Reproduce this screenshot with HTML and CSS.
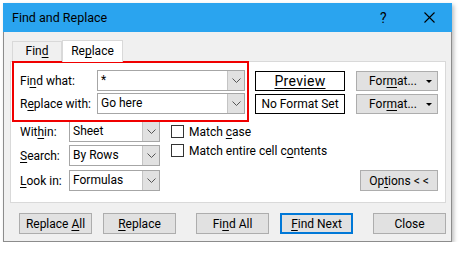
FILE: index.html
```html
<!DOCTYPE html>
<html lang="en">
<head>
    <meta charset="UTF-8">
    <title>Find and Replace</title>
    <link rel="stylesheet" href="styles.css">
</head>
<body>
    <div class="dialog">
        <div class="titlebar">
            <span class="title">Find and Replace</span>
            <span class="help">?</span>
            <svg class="close-x" width="11" height="11" viewBox="0 0 11 11">
                <path d="M0.5 0.5 L10.5 10.5 M10.5 0.5 L0.5 10.5" stroke="#000" stroke-width="1.1" fill="none"/>
            </svg>
        </div>

        <div class="tabs">
            <div class="tab">Fin<u>d</u></div>
            <div class="tab active">Re<u>p</u>lace</div>
        </div>

        <div class="panel">
            <!-- annotation frame round the two text fields -->
            <div class="highlight"></div>

            <div class="field-row">
                <label class="label-wide">Fi<u>n</u>d what:</label>
                <div class="combo combo-wide"><span class="combo-text">*</span><span class="combo-btn"><svg width="9" height="5" viewBox="0 0 9 5"><path d="M0.5 0.5 L4.5 4.5 L8.5 0.5" stroke="#555" fill="none"/></svg></span></div>
                <div class="preview preview-main"><u>Preview</u></div>
                <button class="btn format-btn">For<u>m</u>at... <span class="caret"></span></button>
            </div>
            <div class="field-row">
                <label class="label-wide">R<u>e</u>place with:</label>
                <div class="combo combo-wide"><span class="combo-text">Go here</span><span class="combo-btn"><svg width="9" height="5" viewBox="0 0 9 5"><path d="M0.5 0.5 L4.5 4.5 L8.5 0.5" stroke="#555" fill="none"/></svg></span></div>
                <div class="preview">No Format Set</div>
                <button class="btn format-btn">For<u>m</u>at... <span class="caret"></span></button>
            </div>

            <div class="options">
                <div class="option-selects">
                    <div class="select-row">
                        <label class="label-narrow">Wit<u>h</u>in:</label>
                        <div class="combo combo-narrow"><span class="combo-text">Sheet</span><span class="combo-btn"><svg width="9" height="5" viewBox="0 0 9 5"><path d="M0.5 0.5 L4.5 4.5 L8.5 0.5" stroke="#555" fill="none"/></svg></span></div>
                    </div>
                    <div class="select-row">
                        <label class="label-narrow"><u>S</u>earch:</label>
                        <div class="combo combo-narrow"><span class="combo-text">By Rows</span><span class="combo-btn"><svg width="9" height="5" viewBox="0 0 9 5"><path d="M0.5 0.5 L4.5 4.5 L8.5 0.5" stroke="#555" fill="none"/></svg></span></div>
                    </div>
                    <div class="select-row">
                        <label class="label-narrow"><u>L</u>ook in:</label>
                        <div class="combo combo-narrow"><span class="combo-text">Formulas</span><span class="combo-btn"><svg width="9" height="5" viewBox="0 0 9 5"><path d="M0.5 0.5 L4.5 4.5 L8.5 0.5" stroke="#555" fill="none"/></svg></span></div>
                    </div>
                </div>
                <div class="checks">
                    <div class="check-row"><span class="checkbox"></span><span>Match <u>c</u>ase</span></div>
                    <div class="check-row"><span class="checkbox"></span><span>Match entire cell c<u>o</u>ntents</span></div>
                </div>
                <button class="btn options-btn">Op<u>t</u>ions &lt; &lt;</button>
            </div>
        </div>

        <div class="actions">
            <button class="btn action">Replace <u>A</u>ll</button>
            <button class="btn action"><u>R</u>eplace</button>
            <button class="btn action gap-left">Fi<u>n</u>d All</button>
            <button class="btn action default"><u>F</u>ind Next</button>
            <button class="btn action gap-left">Close</button>
        </div>
    </div>
</body>
</html>
```

FILE: styles.css
```css
body {
    margin: 0;
    background: #fff;
    font-family: Roboto, "Noto Sans", sans-serif;
    font-size: 12px;
    color: #000;
}

u {
    text-decoration: underline;
    text-underline-offset: 2px;
}

.dialog {
    position: relative;
    margin: 3px 0 0 3px;
    width: 449px;
    height: 239px;
    box-sizing: border-box;
    background: #f0f0f0;
    border: 1px solid #8c8c8c;
    border-top: none;
    box-shadow: 2px 2px 4px rgba(0, 0, 0, 0.25);
}

.titlebar {
    display: flex;
    align-items: center;
    height: 29px;
    margin: 0 -1px;
    padding: 0 0 0 9px;
    background: #2aa4ef;
}

.title {
    flex: 1;
    font-size: 12.5px;
}

.help {
    width: 20px;
    font-size: 14px;
    margin-right: 24px;
}

.close-x {
    margin-right: 17px;
}

.tabs {
    display: flex;
    align-items: flex-end;
    height: 29px;
    padding-left: 8px;
}

.tab {
    box-sizing: border-box;
    height: 20px;
    width: 50px;
    padding-top: 2px;
    text-align: center;
    border: 1px solid #d9d9d9;
    border-bottom: none;
    background: #f0f0f0;
}

.tab.active {
    width: 61px;
    height: 22px;
    padding-top: 3px;
    background: #fff;
    margin-bottom: -1px;
    position: relative;
    z-index: 1;
}

.panel {
    position: relative;
    box-sizing: border-box;
    width: 436px;
    height: 142px;
    margin-left: 6px;
    padding: 8px 7px 0 9px;
    background: #fff;
    border: 1px solid #d9d9d9;
}

.highlight {
    position: absolute;
    left: 1px;
    top: -1px;
    width: 237px;
    height: 61px;
    box-sizing: border-box;
    border: 2px solid #f00000;
}

.field-row {
    display: flex;
    align-items: center;
    height: 21px;
    margin-bottom: 2px;
}

.label-wide {
    width: 77px;
}

.label-narrow {
    width: 49px;
}

.combo {
    display: flex;
    box-sizing: border-box;
    height: 21px;
    border: 1px solid #a6a6a6;
    background: #fff;
}

.combo-wide {
    width: 148px;
}

.combo-narrow {
    width: 91px;
}

.combo-text {
    flex: 1;
    padding-left: 3px;
    line-height: 18px;
}

.combo-btn {
    display: flex;
    align-items: center;
    justify-content: center;
    width: 16px;
    background: #e1e1e1;
    border-left: 1px solid #c4c4c4;
}

.preview {
    box-sizing: border-box;
    width: 90px;
    height: 20px;
    margin-left: 10px;
    border: 1px solid #000;
    text-align: center;
    line-height: 18px;
}

.preview-main {
    font-size: 14px;
    letter-spacing: 0.3px;
}

.btn {
    box-sizing: border-box;
    font-family: inherit;
    font-size: 12px;
    color: #000;
    background: #e1e1e1;
    border: 1px solid #adadad;
    padding: 0;
}

.format-btn {
    position: relative;
    width: 82px;
    height: 20px;
    margin-left: 11px;
    padding-right: 8px;
}

.caret {
    position: absolute;
    right: 5px;
    top: 8px;
    width: 0;
    height: 0;
    border-left: 3px solid transparent;
    border-right: 3px solid transparent;
    border-top: 3px solid #000;
}

.options {
    display: flex;
    margin-top: 7px;
}

.option-selects {
    display: flex;
    flex-direction: column;
    gap: 3px;
}

.select-row {
    display: flex;
    align-items: center;
    height: 21px;
}

.select-row + .select-row + .select-row {
    margin-top: 1px;
}

.checks {
    flex: 1;
    margin-left: 11px;
    padding-top: 1px;
}

.check-row {
    display: flex;
    align-items: center;
    height: 19px;
}

.checkbox {
    box-sizing: border-box;
    width: 13px;
    height: 13px;
    margin-right: 5px;
    border: 1px solid #333;
    background: #fff;
}

.options-btn {
    align-self: flex-end;
    width: 78px;
    height: 21px;
}

.actions {
    display: flex;
    padding: 10px 0 0 15px;
}

.action {
    width: 73px;
    height: 21px;
    margin-left: 11px;
}

.action:first-child {
    margin-left: 0;
}

.action.gap-left {
    margin-left: 20px;
}

.action.default {
    border: 2px solid #0078d7;
}
```
